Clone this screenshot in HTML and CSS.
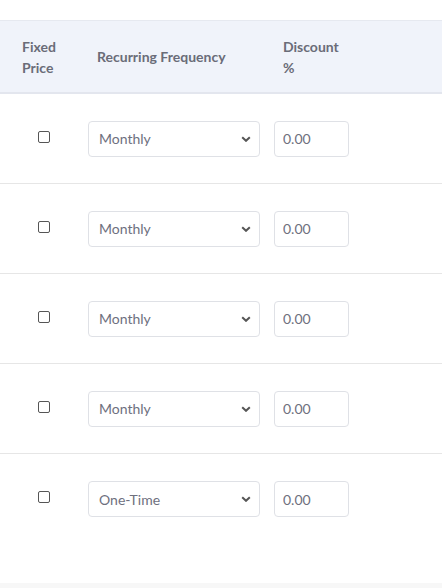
FILE: index.html
```html
<!DOCTYPE html>
<html lang="en">
<head>
    <meta charset="UTF-8">
    <meta name="viewport" content="width=device-width, initial-scale=1.0">
    <title>Recurring Pricing</title>
    <link rel="stylesheet" href="styles.css">
</head>
<body>
    <div class="table">
        <div class="row head">
            <div class="cell c1">Fixed<br>Price</div>
            <div class="cell c2">Recurring Frequency</div>
            <div class="cell c3">Discount<br>%</div>
        </div>

        <div class="row">
            <div class="cell c1"><input type="checkbox" class="check"></div>
            <div class="cell c2">
                <div class="select-wrap">
                    <select class="select"><option>Monthly</option><option>One-Time</option></select>
                    <svg class="chev" width="10" height="6" viewBox="0 0 10 6"><path d="M1.2 1.2 L5 4.8 L8.8 1.2" fill="none" stroke="#555" stroke-width="2"/></svg>
                </div>
            </div>
            <div class="cell c3"><input class="field" type="text" value="0.00"></div>
        </div>

        <div class="row">
            <div class="cell c1"><input type="checkbox" class="check"></div>
            <div class="cell c2">
                <div class="select-wrap">
                    <select class="select"><option>Monthly</option><option>One-Time</option></select>
                    <svg class="chev" width="10" height="6" viewBox="0 0 10 6"><path d="M1.2 1.2 L5 4.8 L8.8 1.2" fill="none" stroke="#555" stroke-width="2"/></svg>
                </div>
            </div>
            <div class="cell c3"><input class="field" type="text" value="0.00"></div>
        </div>

        <div class="row">
            <div class="cell c1"><input type="checkbox" class="check"></div>
            <div class="cell c2">
                <div class="select-wrap">
                    <select class="select"><option>Monthly</option><option>One-Time</option></select>
                    <svg class="chev" width="10" height="6" viewBox="0 0 10 6"><path d="M1.2 1.2 L5 4.8 L8.8 1.2" fill="none" stroke="#555" stroke-width="2"/></svg>
                </div>
            </div>
            <div class="cell c3"><input class="field" type="text" value="0.00"></div>
        </div>

        <div class="row">
            <div class="cell c1"><input type="checkbox" class="check"></div>
            <div class="cell c2">
                <div class="select-wrap">
                    <select class="select"><option>Monthly</option><option>One-Time</option></select>
                    <svg class="chev" width="10" height="6" viewBox="0 0 10 6"><path d="M1.2 1.2 L5 4.8 L8.8 1.2" fill="none" stroke="#555" stroke-width="2"/></svg>
                </div>
            </div>
            <div class="cell c3"><input class="field" type="text" value="0.00"></div>
        </div>

        <div class="row last">
            <div class="cell c1"><input type="checkbox" class="check"></div>
            <div class="cell c2">
                <div class="select-wrap">
                    <select class="select"><option>One-Time</option><option>Monthly</option></select>
                    <svg class="chev" width="10" height="6" viewBox="0 0 10 6"><path d="M1.2 1.2 L5 4.8 L8.8 1.2" fill="none" stroke="#555" stroke-width="2"/></svg>
                </div>
            </div>
            <div class="cell c3"><input class="field" type="text" value="0.00"></div>
        </div>
    </div>
    <div class="footer-band"></div>
</body>
</html>
```

FILE: styles.css
```css
* {
    box-sizing: border-box;
}
body {
    margin: 0;
    padding-top: 20px;
    font-family: "Lato", "Liberation Sans", sans-serif;
    background-color: #fff;
    color: #6e707e;
}
.row {
    display: grid;
    grid-template-columns: 78px 186px 1fr;
    align-items: center;
    height: 90px;
    border-bottom: 1px solid #e6e6e6;
}
.row.head {
    height: 74px;
    background-color: #f0f3fa;
    border-top: 1px solid #e6e9f0;
    border-bottom: 2px solid #e3e6ee;
    font-size: 14px;
    font-weight: bold;
    line-height: 21px;
    color: #6a6c78;
}
.row.last {
    height: 129px;
    padding-bottom: 39px;
    border-bottom: none;
}
.head .c1 {
    display: block;
    padding-left: 22px;
}
.head .c2 {
    padding-left: 19px;
}
.head .c3 {
    padding-left: 19px;
}
.c1 {
    display: flex;
    justify-content: center;
    padding-left: 10px;
}
.check {
    appearance: none;
    width: 12px;
    height: 12px;
    margin: 0 0 4px 0;
    border: 1px solid #555;
    border-radius: 2px;
    background: #fff;
}
.c2 {
    padding-left: 10px;
}
.select-wrap {
    position: relative;
    width: 172px;
}
.select {
    appearance: none;
    width: 100%;
    height: 36px;
    padding: 0 10px;
    border: 1px solid #dfe1e6;
    border-radius: 4px;
    background: #fff;
    font-family: inherit;
    font-size: 14px;
    color: #6e707e;
}
.chev {
    position: absolute;
    right: 9px;
    top: 15px;
}
.c3 {
    padding-left: 10px;
}
.field {
    width: 75px;
    height: 36px;
    padding: 0 8px;
    border: 1px solid #dfe1e6;
    border-radius: 4px;
    font-family: inherit;
    font-size: 14px;
    color: #6e707e;
}
.footer-band {
    height: 10px;
    background-color: #f7f7f7;
}
```
